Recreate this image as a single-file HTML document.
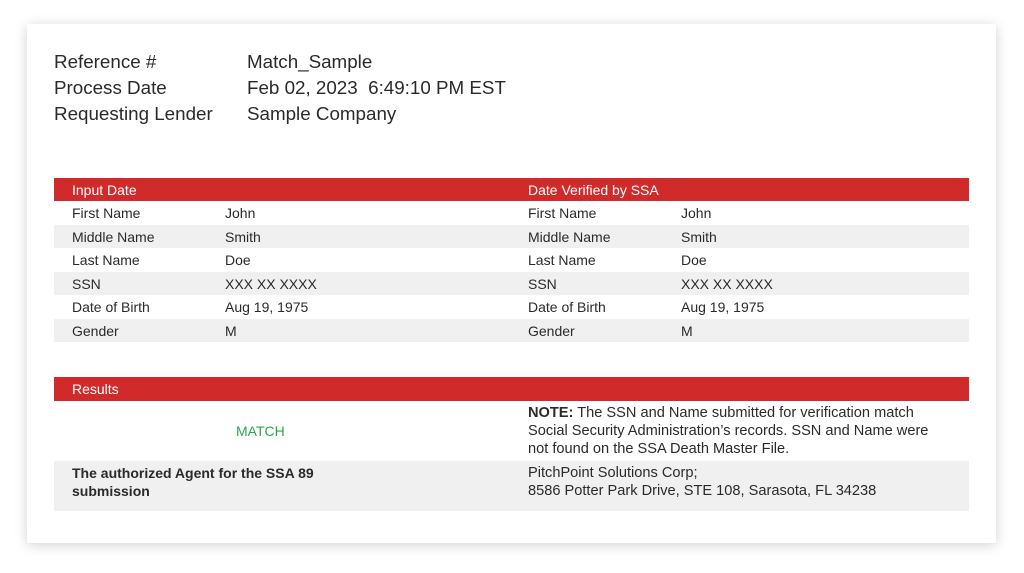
<!DOCTYPE html>
<html><head><style>
*{margin:0;padding:0;box-sizing:border-box}
body{width:1024px;height:573px;background:#fff;font-family:"Liberation Sans",sans-serif;color:#2a2a2a;position:relative;overflow:hidden}
.card{position:absolute;left:27px;top:24px;width:969px;height:519px;background:#fff;box-shadow:0 2px 12px rgba(0,0,0,.18)}
.a{position:absolute;white-space:nowrap}
.h{font-size:18.8px;line-height:26px}
.bar{position:absolute;left:54px;width:915px;background:#d02b2a;color:#fff;font-size:14px}
.row{position:absolute;left:54px;width:915px;font-size:14px}
.r2{font-size:14.6px}
.g{background:#f0f0f0}
.row span{position:absolute;top:50%;transform:translateY(-50%)}
</style></head><body>
<div class="card"></div>
<div class="a h" style="left:54px;top:49px">Reference #<br>Process Date<br>Requesting Lender</div>
<div class="a h" style="left:247px;top:49px">Match_Sample<br>Feb 02, 2023&nbsp; 6:49:10 PM EST<br>Sample Company</div>

<div class="bar row" style="top:178px;height:23px"><span style="left:18px">Input Date</span><span style="left:474px">Date Verified by SSA</span></div>
<div class="row" style="top:201px;height:24px"><span style="left:18px">First Name</span><span style="left:171px">John</span><span style="left:474px">First Name</span><span style="left:627px">John</span></div>
<div class="row g" style="top:225px;height:23px"><span style="left:18px">Middle Name</span><span style="left:171px">Smith</span><span style="left:474px">Middle Name</span><span style="left:627px">Smith</span></div>
<div class="row" style="top:248px;height:24px"><span style="left:18px">Last Name</span><span style="left:171px">Doe</span><span style="left:474px">Last Name</span><span style="left:627px">Doe</span></div>
<div class="row g" style="top:272px;height:23px"><span style="left:18px">SSN</span><span style="left:171px">XXX XX XXXX</span><span style="left:474px">SSN</span><span style="left:627px">XXX XX XXXX</span></div>
<div class="row" style="top:295px;height:24px"><span style="left:18px">Date of Birth</span><span style="left:171px">Aug 19, 1975</span><span style="left:474px">Date of Birth</span><span style="left:627px">Aug 19, 1975</span></div>
<div class="row g" style="top:319px;height:23px"><span style="left:18px">Gender</span><span style="left:171px">M</span><span style="left:474px">Gender</span><span style="left:627px">M</span></div>

<div class="bar row" style="top:377px;height:24px"><span style="left:18px">Results</span></div>
<div class="row r2" style="top:401px;height:60px"><span style="left:182px;color:#2aa84a;font-size:14px">MATCH</span><span style="left:474px;line-height:18px;width:415px"><b>NOTE:</b> The SSN and Name submitted for verification match Social Security Administration’s records. SSN and Name were not found on the SSA Death Master File.</span></div>
<div class="row g r2" style="top:461px;height:50px"><span style="left:18px;top:3px;transform:none;line-height:18px;font-weight:bold;width:270px;font-size:14px">The authorized Agent for the SSA 89 submission</span><span style="left:474px;top:3px;transform:none;line-height:18px">PitchPoint Solutions Corp;<br>8586 Potter Park Drive, STE 108, Sarasota, FL 34238</span></div>
</body></html>
